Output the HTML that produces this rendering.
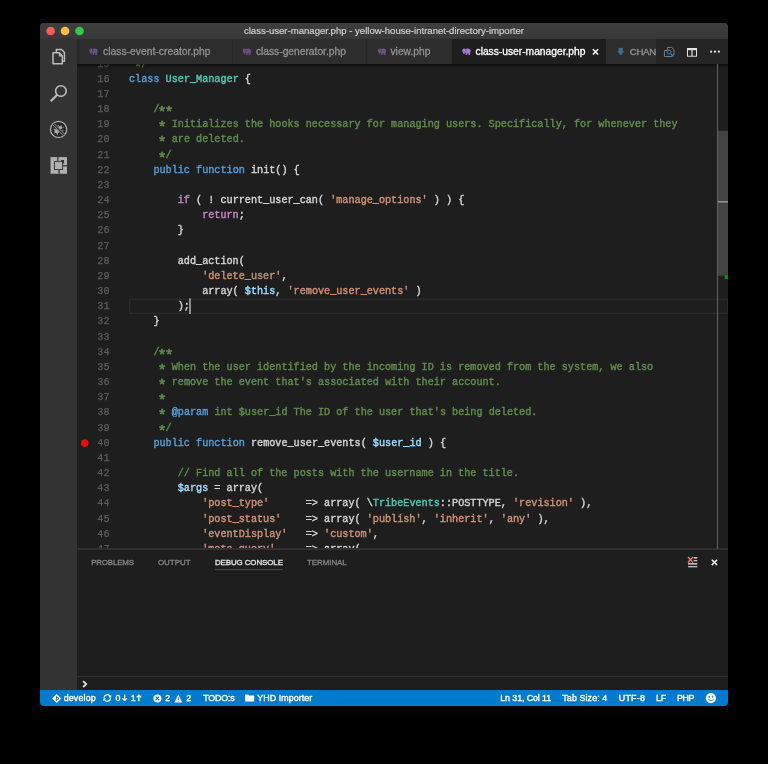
<!DOCTYPE html>
<html><head><meta charset="utf-8">
<style>
*{box-sizing:border-box;margin:0;padding:0}
html,body{width:768px;height:764px;background:#000;overflow:hidden}
body{position:relative;font-family:"Liberation Sans",sans-serif;-webkit-text-stroke:0.2px;}
#win{will-change:transform;position:absolute;left:40px;top:23px;width:688px;height:683px;background:#1e1e1e;border-radius:4px;overflow:hidden}
#title{position:absolute;left:0;top:0;width:688px;height:16px;background:linear-gradient(#3e3e3e,#383838);}
#title .txt{position:absolute;left:0;width:688px;top:0;height:16px;line-height:16px;text-align:center;font-size:9.57px;color:#cfcfcf}
.tl{position:absolute;top:3.7px;width:8.7px;height:8.7px;border-radius:50%}
#act{position:absolute;left:0;top:16px;width:37px;height:651px;background:#333333}
#act svg{position:absolute;overflow:visible}
.geo{position:absolute;left:0;top:0;overflow:hidden}
#tabs{position:absolute;left:37px;top:16px;width:651px;height:25px;background:#252526}
.tab{-webkit-text-stroke:0.3px;position:absolute;top:0;height:25px;color:#929292;font-size:10.25px;line-height:25px;white-space:nowrap;overflow:hidden}
.tab.active{color:#ffffff}
.tab .tx{position:absolute;top:0}
.tab svg,#tabs>svg{position:absolute;overflow:visible}
#editor{position:absolute;left:37px;top:41px;width:651px;height:484.5px;background:#1e1e1e;overflow:hidden;font-family:"Liberation Mono",monospace;font-size:10.160px;}
#editor .shadow{position:absolute;left:0;top:0;width:651px;height:4px;background:linear-gradient(rgba(0,0,0,.55),rgba(0,0,0,0));z-index:5}
.ln{-webkit-text-stroke:0.4px;position:absolute;left:0;width:651px;height:15.167px;line-height:15.167px;white-space:pre;margin-top:-10.28px}
.num{position:absolute;right:618.5px;color:#5c5c5c;-webkit-text-stroke:0.25px}
.src{position:absolute;left:52px;color:#d4d4d4}
.m i{font-style:normal;display:inline-block;transform:translateY(4.2px) scale(1.5)}
.k{color:#569cd6}.t{color:#4ec9b0}.c{color:#c586c0}.s{color:#ce9178}.m{color:#608b4e}.v{color:#9cdcfe}.w{color:#d4d4d4}
#curline{position:absolute;left:52px;top:234.6px;width:598.6px;height:15.2px;border:1.4px solid #292929}
#cursor{position:absolute;left:112.2px;top:234.4px;width:1.6px;height:15.6px;background:#aeafad}
#bp{position:absolute;left:3.9px;top:375.3px;width:7.6px;height:7.6px;border-radius:50%;background:#e01212}
#sbline{position:absolute;left:640px;top:0;width:1.1px;height:485px;background:#5a5a5a;z-index:6}
#slider{position:absolute;left:641px;top:66.7px;width:10px;height:145.1px;background:#424242;z-index:6}
#curmark{position:absolute;left:641px;top:137px;width:10px;height:1.4px;background:#9a9a9a;z-index:7}
#green{position:absolute;left:647.7px;top:211.2px;width:3.3px;height:4px;background:#168a16;z-index:7}
#panel{position:absolute;left:37px;top:525px;width:651px;height:142px;background:#1e1e1e}
#panel svg{position:absolute;overflow:visible}
.pt{transform:translateY(0.5px);position:absolute;top:9.4px;font-size:7.9px;color:#848484;-webkit-text-stroke:0.3px;line-height:10px;white-space:nowrap;letter-spacing:-0.2px}
.pt.on{color:#e7e7e7}
#pul{position:absolute;left:138px;top:20px;width:68px;height:1px;background:#555}
#pin{position:absolute;left:0;top:127px;width:651px;height:1px;background:#333}
#status{position:absolute;left:0;top:667px;width:688px;height:16px;background:#007acc;color:#fff;font-size:8.9px;line-height:16px;-webkit-text-stroke:0.35px}
#status svg{position:absolute;overflow:visible}
.st{position:absolute;top:0;white-space:nowrap}
</style></head><body>
<div id="win">
  <div id="title">
    <svg class="geo" width="688" height="16"><circle cx="10.6" cy="8" r="4.35" fill="#fc5b57"/><circle cx="25.05" cy="8" r="4.35" fill="#fdbc40"/><circle cx="39.5" cy="8" r="4.35" fill="#34c84a"/></svg>
    <div class="txt">class-user-manager.php - yellow-house-intranet-directory-importer</div>
  </div>
  <div id="act">
    <!-- files -->
    <svg style="left:0;top:0;transform:translate(11.8px,9.2px)" width="14.3" height="16.9" viewBox="0 0 14.3 16.9" fill="none" stroke="#bcbcbc" stroke-width="1.5" stroke-linejoin="round">
      <path d="M4.55 4V1.3H9.7L12.65 4.25V13.05H11.2"/>
      <path d="M1.2 4.65H7.6L10.55 7.6V15.65H1.2Z"/>
      <path d="M7.5 4.8V7.7H10.4" stroke-width="1.1"/>
    </svg>
    <!-- search -->
    <svg style="left:0;top:0;transform:translate(9.5px,45.5px)" width="18" height="18" viewBox="0 0 18 18" fill="none" stroke="#bababa">
      <circle cx="11.4" cy="6.5" r="5.3" stroke-width="1.65"/>
      <path d="M7.7 10.3L1.3 16.7" stroke-width="2.3"/>
    </svg>
    <!-- debug -->
    <svg style="left:0;top:0;transform:translate(9.8px,81.6px)" width="17.6" height="17.6" viewBox="0 0 17.6 17.6">
      <circle cx="8.8" cy="8.8" r="8.1" fill="#272727" stroke="#b4b4b4" stroke-width="1.2"/>
      <g stroke="#9c9c9c" stroke-width="0.9" fill="#a8a8a8">
        <ellipse cx="7.4" cy="10.2" rx="2.5" ry="2.9" transform="rotate(45 7.4 10.2)" stroke="none"/>
        <ellipse cx="10.6" cy="7" rx="1.7" ry="1.9" stroke="none"/>
        <path d="M8.2 4.2L9 6.2M11.6 4.6L11 6M12.8 7H14M12.4 9.6L13.6 10.2M3.6 8.6L5.4 9M7.8 12.6L7.4 14.6M4.4 12.6L5.6 11.8" fill="none"/>
      </g>
      <path d="M3.4 3.4L14.2 14.2" stroke="#272727" stroke-width="2.6"/>
      <path d="M2.7 4.1L13.5 14.9M4.1 2.7L14.9 13.5" stroke="#b4b4b4" stroke-width="0.8"/>
    </svg>
    <!-- extensions -->
    <svg style="left:0;top:0;transform:translate(10.5px,118.1px)" width="16.5" height="16.7" viewBox="0 0 16.5 16.7">
      <rect x="0" y="0" width="16.5" height="16.7" fill="#b0b0b0"/>
      <path d="M7.4 0V4.3M8.6 12.6V16.7M12.3 8.8H16.5" stroke="#333" stroke-width="1.3" fill="none"/>
      <path d="M10.6 3.4H13.1V6.6" stroke="#333" stroke-width="1" fill="none"/>
      <rect x="10.6" y="3" width="2.6" height="2" fill="#2c2c2c"/>
      <rect x="3.9" y="4.5" width="8.2" height="8" fill="#b0b0b0" stroke="#333" stroke-width="0.9"/>
    </svg>
  </div>
  <div id="tabs">
    <svg class="geo" width="651" height="25" viewBox="0 0 651 25">
      <rect x="0" y="0" width="2.3" height="25" fill="#292929"/>
      <rect x="2.3" y="0" width="152.9" height="25" fill="#2d2d2d"/>
      <rect x="156" y="0" width="133.3" height="25" fill="#2d2d2d"/>
      <rect x="290.1" y="0" width="85" height="25" fill="#2d2d2d"/>
      <rect x="375" y="0" width="154" height="25" fill="#1e1e1e"/>
      <rect x="529" y="0" width="50" height="25" fill="#2d2d2d"/>
    </svg>
    <div class="tab" style="left:1.4px;width:154.1px"><svg style="left:0;top:0;transform:translate(11.2px,9.1px)" width="8.6" height="6.8" fill="#6a4f84"><circle cx="2.1" cy="2.5" r="2.1"/><path d="M0.4 3.2Q0.6 5.6 2 6.3L2.8 4.6Z"/><ellipse cx="5.5" cy="2.9" rx="3" ry="2.5"/><rect x="3.5" y="3.4" width="1.5" height="3.4" rx=".5"/><rect x="6.2" y="3.4" width="1.7" height="3.4" rx=".5"/><path d="M3.5 0.6Q3 2.6 3.9 3.9" fill="none" stroke="#222" stroke-opacity=".55" stroke-width=".55"/></svg><span class="tx" style="left:24.6px;letter-spacing:.045px">class-event-creator.php</span></div>
    <div class="tab" style="left:156.5px;width:134.4px"><svg style="left:0;top:0;transform:translate(8.6px,9.1px)" width="8.6" height="6.8" fill="#6a4f84"><circle cx="2.1" cy="2.5" r="2.1"/><path d="M0.4 3.2Q0.6 5.6 2 6.3L2.8 4.6Z"/><ellipse cx="5.5" cy="2.9" rx="3" ry="2.5"/><rect x="3.5" y="3.4" width="1.5" height="3.4" rx=".5"/><rect x="6.2" y="3.4" width="1.7" height="3.4" rx=".5"/><path d="M3.5 0.6Q3 2.6 3.9 3.9" fill="none" stroke="#222" stroke-opacity=".55" stroke-width=".55"/></svg><span class="tx" style="left:22.4px">class-generator.php</span></div>
    <div class="tab" style="left:291.8px;width:83.5px"><svg style="left:0;top:0;transform:translate(8.7px,9.1px)" width="8.6" height="6.8" fill="#6a4f84"><circle cx="2.1" cy="2.5" r="2.1"/><path d="M0.4 3.2Q0.6 5.6 2 6.3L2.8 4.6Z"/><ellipse cx="5.5" cy="2.9" rx="3" ry="2.5"/><rect x="3.5" y="3.4" width="1.5" height="3.4" rx=".5"/><rect x="6.2" y="3.4" width="1.7" height="3.4" rx=".5"/><path d="M3.5 0.6Q3 2.6 3.9 3.9" fill="none" stroke="#222" stroke-opacity=".55" stroke-width=".55"/></svg><span class="tx" style="left:21.7px">view.php</span></div>
    <div class="tab active" style="left:375.5px;width:153.4px"><svg style="left:0;top:0;transform:translate(9.2px,9.1px)" width="8.6" height="6.8" fill="#a57acc"><circle cx="2.1" cy="2.5" r="2.1"/><path d="M0.4 3.2Q0.6 5.6 2 6.3L2.8 4.6Z"/><ellipse cx="5.5" cy="2.9" rx="3" ry="2.5"/><rect x="3.5" y="3.4" width="1.5" height="3.4" rx=".5"/><rect x="6.2" y="3.4" width="1.7" height="3.4" rx=".5"/><path d="M3.5 0.6Q3 2.6 3.9 3.9" fill="none" stroke="#222" stroke-opacity=".55" stroke-width=".55"/></svg><span class="tx" style="left:23px">class-user-manager.php</span>
      <svg style="left:0;top:0;transform:translate(139.3px,9.7px)" width="6.4" height="6.4" viewBox="0 0 6.4 6.4"><path d="M0.6 0.6L5.8 5.8M5.8 0.6L0.6 5.8" stroke="#fff" stroke-width="1.5"/></svg></div>
    <div class="tab" style="left:528.9px;width:50.1px"><svg style="left:0;top:0;transform:translate(11.3px,8.2px)" width="6.9" height="8.3" viewBox="0 0 6.9 8.3" fill="#3c6e8b"><path d="M1.3 0L2.4 .9H4.5L5.6 0V3.8H6.9L3.45 8.3L0 3.8H1.3Z"/></svg><span class="tx" style="left:23.9px;font-size:9.7px;letter-spacing:-0.33px;-webkit-text-stroke:0.35px">CHANGELOG.md</span></div>
    <!-- actions -->
    <svg style="left:0;top:0;transform:translate(587px,8px)" width="10.4" height="10" viewBox="0 0 10.4 10" fill="none">
      <path d="M3.2 3V0.45H7.7L10 2.7V7.9H8.6" stroke="#8a8a8a" stroke-width=".85"/>
      <path d="M3 3.5H0.45V9.55H7.9V8.6" stroke="#8a8a8a" stroke-width=".85"/>
      <circle cx="5" cy="5" r="2" stroke="#3f7db0" stroke-width="1"/>
      <path d="M6.5 6.5L9.6 9.6" stroke="#3f7db0" stroke-width="1.1"/>
    </svg>
    <svg style="left:0;top:0;transform:translate(610px,9px)" width="10" height="8.7" viewBox="0 0 10 8.7">
      <rect x="0" y="0" width="10" height="8.7" fill="#e4e4e4"/>
      <rect x="1" y="2.2" width="3.4" height="5.6" fill="#252526"/>
      <rect x="5.6" y="2.2" width="3.4" height="5.6" fill="#252526"/>
    </svg>
    <svg style="left:0;top:0;transform:translate(632.8px,11.5px)" width="10.4" height="2.4" viewBox="0 0 10.4 2.4" fill="#d8d8d8"><circle cx="1.3" cy="1.2" r="1.15"/><circle cx="5.2" cy="1.2" r="1.15"/><circle cx="9.1" cy="1.2" r="1.15"/></svg>
  </div>
  <div id="editor">
    <svg class="geo" width="651" height="485" viewBox="0 0 651 485">
      <rect x="52.7" y="235.3" width="598" height="14" fill="none" stroke="#2a2a2a" stroke-width="1.4"/>
      <circle cx="7.7" cy="379.1" r="3.8" fill="#e01212"/>
    </svg>
<div class="ln" style="top:2.83px"><span class="num">15</span><span class="src"><span class="m"> <i>*</i>/</span></span></div>
<div class="ln" style="top:18.00px"><span class="num">16</span><span class="src"><span class="k">class</span><span class="w"> </span><span class="t">User_Manager</span><span class="w"> {</span></span></div>
<div class="ln" style="top:33.17px"><span class="num">17</span><span class="src"></span></div>
<div class="ln" style="top:48.33px"><span class="num">18</span><span class="src"><span class="m">    /<i>*</i><i>*</i></span></span></div>
<div class="ln" style="top:63.50px"><span class="num">19</span><span class="src"><span class="m">     <i>*</i> Initializes the hooks necessary for managing users. Specifically, for whenever they</span></span></div>
<div class="ln" style="top:78.67px"><span class="num">20</span><span class="src"><span class="m">     <i>*</i> are deleted.</span></span></div>
<div class="ln" style="top:93.83px"><span class="num">21</span><span class="src"><span class="m">     <i>*</i>/</span></span></div>
<div class="ln" style="top:109.00px"><span class="num">22</span><span class="src"><span class="w">    </span><span class="k">public</span><span class="w"> </span><span class="k">function</span><span class="w"> init() {</span></span></div>
<div class="ln" style="top:124.17px"><span class="num">23</span><span class="src"></span></div>
<div class="ln" style="top:139.34px"><span class="num">24</span><span class="src"><span class="w">        </span><span class="c">if</span><span class="w"> ( ! current_user_can( </span><span class="s">'manage_options'</span><span class="w"> ) ) {</span></span></div>
<div class="ln" style="top:154.50px"><span class="num">25</span><span class="src"><span class="w">            </span><span class="c">return</span><span class="w">;</span></span></div>
<div class="ln" style="top:169.67px"><span class="num">26</span><span class="src"><span class="w">        }</span></span></div>
<div class="ln" style="top:184.84px"><span class="num">27</span><span class="src"></span></div>
<div class="ln" style="top:200.00px"><span class="num">28</span><span class="src"><span class="w">        add_action(</span></span></div>
<div class="ln" style="top:215.17px"><span class="num">29</span><span class="src"><span class="w">            </span><span class="s">'delete_user'</span><span class="w">,</span></span></div>
<div class="ln" style="top:230.34px"><span class="num">30</span><span class="src"><span class="w">            array( </span><span class="v">$this</span><span class="w">, </span><span class="s">'remove_user_events'</span><span class="w"> )</span></span></div>
<div class="ln" style="top:245.50px"><span class="num">31</span><span class="src"><span class="w">        );</span></span></div>
<div class="ln" style="top:260.67px"><span class="num">32</span><span class="src"><span class="w">    }</span></span></div>
<div class="ln" style="top:275.84px"><span class="num">33</span><span class="src"></span></div>
<div class="ln" style="top:291.01px"><span class="num">34</span><span class="src"><span class="m">    /<i>*</i><i>*</i></span></span></div>
<div class="ln" style="top:306.17px"><span class="num">35</span><span class="src"><span class="m">     <i>*</i> When the user identified by the incoming ID is removed from the system, we also</span></span></div>
<div class="ln" style="top:321.34px"><span class="num">36</span><span class="src"><span class="m">     <i>*</i> remove the event that's associated with their account.</span></span></div>
<div class="ln" style="top:336.51px"><span class="num">37</span><span class="src"><span class="m">     <i>*</i></span></span></div>
<div class="ln" style="top:351.67px"><span class="num">38</span><span class="src"><span class="m">     <i>*</i> </span><span class="k">@param</span><span class="m"> int $user_id The ID of the user that's being deleted.</span></span></div>
<div class="ln" style="top:366.84px"><span class="num">39</span><span class="src"><span class="m">     <i>*</i>/</span></span></div>
<div class="ln" style="top:382.01px"><span class="num">40</span><span class="src"><span class="w">    </span><span class="k">public</span><span class="w"> </span><span class="k">function</span><span class="w"> remove_user_events( </span><span class="v">$user_id</span><span class="w"> ) {</span></span></div>
<div class="ln" style="top:397.18px"><span class="num">41</span><span class="src"></span></div>
<div class="ln" style="top:412.34px"><span class="num">42</span><span class="src"><span class="m">        // Find all of the posts with the username in the title.</span></span></div>
<div class="ln" style="top:427.51px"><span class="num">43</span><span class="src"><span class="w">        </span><span class="v">$args</span><span class="w"> = array(</span></span></div>
<div class="ln" style="top:442.68px"><span class="num">44</span><span class="src"><span class="w">            </span><span class="s">'post_type'</span><span class="w">      =&gt; array( \</span><span class="t">TribeEvents</span><span class="w">::POSTTYPE, </span><span class="s">'revision'</span><span class="w"> ),</span></span></div>
<div class="ln" style="top:457.84px"><span class="num">45</span><span class="src"><span class="w">            </span><span class="s">'post_status'</span><span class="w">    =&gt; array( </span><span class="s">'publish'</span><span class="w">, </span><span class="s">'inherit'</span><span class="w">, </span><span class="s">'any'</span><span class="w"> ),</span></span></div>
<div class="ln" style="top:473.01px"><span class="num">46</span><span class="src"><span class="w">            </span><span class="s">'eventDisplay'</span><span class="w">   =&gt; </span><span class="s">'custom'</span><span class="w">,</span></span></div>
<div class="ln" style="top:488.18px"><span class="num">47</span><span class="src"><span class="w">            </span><span class="s">'meta_query'</span><span class="w">     =&gt; array(</span></span></div>
    <div class="shadow"></div>
    <svg class="geo" style="z-index:6" width="651" height="485" viewBox="0 0 651 485">
      <rect x="112.2" y="234.4" width="1.6" height="15.6" fill="#aeafad"/>
      <rect x="641" y="66.7" width="10" height="145.1" fill="#434343"/>
      <rect x="639.9" y="0" width="1.2" height="485" fill="#5c5c5c"/>
      <rect x="641" y="137.1" width="10" height="1.4" fill="#9c9c9c"/>
      <rect x="647.7" y="211.2" width="3.3" height="4" fill="#168a16"/>
    </svg>
  </div>
  <div id="panel">
    <svg class="geo" width="651" height="142" viewBox="0 0 651 142">
      <rect x="0" y="0.4" width="651" height="1.25" fill="#3b3b3b"/>
      <rect x="137.9" y="21" width="68" height="0.9" fill="#505050"/>
      <rect x="0" y="127.9" width="651" height="1" fill="#343434"/>
    </svg>
    <span class="pt" style="left:14.2px;letter-spacing:-.15px">PROBLEMS</span>
    <span class="pt" style="left:80.9px;letter-spacing:.05px">OUTPUT</span>
    <span class="pt on" style="left:137.9px;letter-spacing:-.07px">DEBUG CONSOLE</span>
    <span class="pt" style="left:230.1px;letter-spacing:-.05px">TERMINAL</span>
    <svg style="left:0;top:0;transform:translate(610.7px,8.6px)" width="9.6" height="10.6" viewBox="0 0 9.6 10.6">
      <path d="M6 1.3H9.6M6 4.2H9.6M0.4 7.3H9.6M0.4 10.2H9.6" stroke="#f4f4f4" stroke-width="1.05"/>
      <path d="M0.3 0.4L5.3 5.9M5.3 0.4L0.3 5.9" stroke="#f48771" stroke-width="1.2"/>
    </svg>
    <svg style="left:0;top:0;transform:translate(634.3px,11.2px)" width="6.3" height="6.3" viewBox="0 0 6.3 6.3"><path d="M0.5 0.5L5.8 5.8M5.8 0.5L0.5 5.8" stroke="#fff" stroke-width="1.5"/></svg>
    <svg style="left:0;top:0;transform:translate(5.3px,132.6px)" width="5" height="7" viewBox="0 0 5 7"><path d="M0.8 0.6L3.9 3.5L0.8 6.4" fill="none" stroke="#e4e4e4" stroke-width="1.75"/></svg>
  </div>
  <div id="status">
    <svg style="left:0;top:0;transform:translate(12.05px,3.9px)" width="9.25" height="9.2" viewBox="0 0 9.25 9.2"><path d="M4.6 0L9.25 4.6L4.6 9.2L0 4.6Z" fill="#fff"/><path d="M4.35 2V7M4.5 3.1L7 4.5L5 5.7" stroke="#007acc" stroke-width=".95" fill="none"/></svg>
    <span class="st" style="left:23.7px;letter-spacing:.15px">develop</span>
    <svg style="left:0;top:0;transform:translate(63.3px,4.1px)" width="8" height="8" viewBox="0 0 8 8" fill="none" stroke="#fff" stroke-width="1.3"><path d="M0.71 3.61A3.3 3.3 0 0 1 6.86 2.25"/><path d="M7.29 4.19A3.3 3.3 0 0 1 1.14 5.55"/><path d="M7.9 0.7V3.4H5.2Z" fill="#fff" stroke="none"/><path d="M0.1 7.1V4.4H2.8Z" fill="#fff" stroke="none"/></svg>
    <span class="st" style="left:75.6px">0</span>
    <svg style="left:0;top:0;transform:translate(82px,4.4px)" width="5.4" height="6.8" viewBox="0 0 5.4 6.8" fill="none" stroke="#fff" stroke-width="1.3"><path d="M2.7 0V6M0.4 3.8L2.7 6.2L5 3.8"/></svg>
    <span class="st" style="left:90.8px">1</span>
    <svg style="left:0;top:0;transform:translate(96.2px,4.4px)" width="5.4" height="6.8" viewBox="0 0 5.4 6.8" fill="none" stroke="#fff" stroke-width="1.3"><path d="M2.7 6.8V0.8M0.4 3L2.7 0.6L5 3"/></svg>
    <svg style="left:0;top:0;transform:translate(113.4px,4.4px)" width="8" height="8" viewBox="0 0 8 8"><circle cx="4" cy="4" r="4" fill="#fff"/><path d="M2.3 2.3L5.7 5.7M5.7 2.3L2.3 5.7" stroke="#007acc" stroke-width="1.2"/></svg>
    <span class="st" style="left:125.3px">2</span>
    <svg style="left:0;top:0;transform:translate(134.4px,4.4px)" width="7.8" height="8" viewBox="0 0 7.8 8"><path d="M3.9 0L7.8 8H0Z" fill="#fff"/><path d="M3.9 2.8V5.6M3.9 6.3V7.2" stroke="#007acc" stroke-width="1"/></svg>
    <span class="st" style="left:146.3px">2</span>
    <span class="st" style="left:163.2px;letter-spacing:-.2px">TODO:s</span>
    <svg style="left:0;top:0;transform:translate(205.1px,4.4px)" width="9.1" height="7.1" viewBox="0 0 9.1 7.1" fill="#fff"><path d="M0 0.4Q0 0 .4 0H3.2L4 1.1H8.7Q9.1 1.1 9.1 1.5V6.7Q9.1 7.1 8.7 7.1H.4Q0 7.1 0 6.7Z"/></svg>
    <span class="st" style="left:217.3px;letter-spacing:.05px">YHD Importer</span>
    <span class="st" style="left:460.3px;letter-spacing:-.11px">Ln 31, Col 11</span>
    <span class="st" style="left:522.3px;letter-spacing:.11px">Tab Size: 4</span>
    <span class="st" style="left:578.8px;letter-spacing:.24px">UTF-8</span>
    <span class="st" style="left:616px;letter-spacing:-.1px">LF</span>
    <span class="st" style="left:637px;letter-spacing:-.4px">PHP</span>
    <svg style="left:0;top:0;transform:translate(665.8px,3.1px)" width="10.2" height="10.2" viewBox="0 0 10.2 10.2"><circle cx="5.1" cy="5.1" r="5.1" fill="#fff"/><circle cx="3.4" cy="3.7" r=".85" fill="#007acc"/><circle cx="6.8" cy="3.7" r=".85" fill="#007acc"/><path d="M2.4 5.9Q5.1 9 7.8 5.9" stroke="#007acc" stroke-width=".9" fill="none"/></svg>
  </div>
</div>
</body></html>
